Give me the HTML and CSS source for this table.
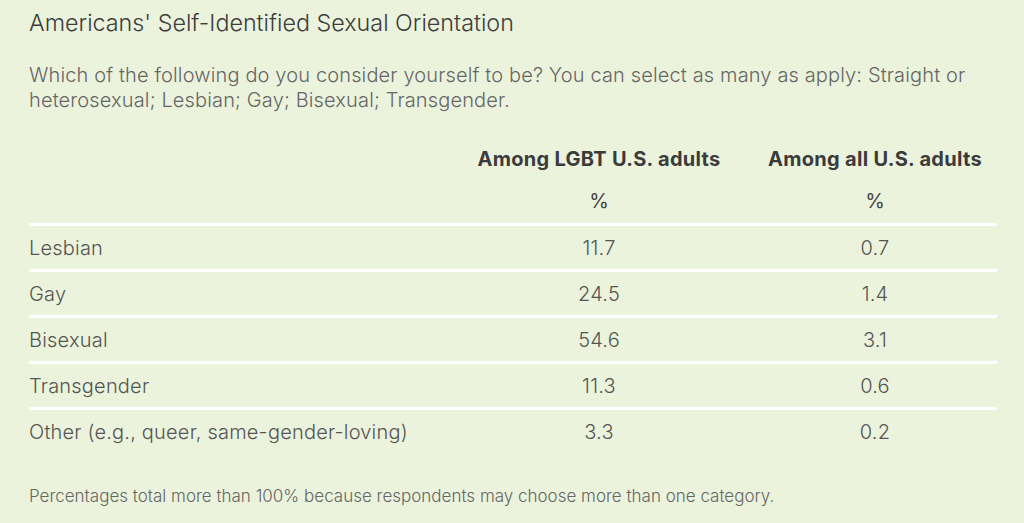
FILE: index.html
```html
<!DOCTYPE html>
<html>
<head>
<meta charset="utf-8">
<link rel="stylesheet" href="styles.css">
</head>
<body>
<div class="page">
  <h1 class="title">Americans' Self-Identified Sexual Orientation</h1>
  <p class="question">Which of the following do you consider yourself to be? You can select as many as apply: Straight or heterosexual; Lesbian; Gay; Bisexual; Transgender.</p>
  <div class="table">
    <div class="row head">
      <div class="cell label"></div>
      <div class="cell num">Among LGBT U.S. adults</div>
      <div class="cell num">Among all U.S. adults</div>
    </div>
    <div class="row unit">
      <div class="cell label"></div>
      <div class="cell num">%</div>
      <div class="cell num">%</div>
    </div>
    <div class="row data">
      <div class="cell label">Lesbian</div>
      <div class="cell num">11.7</div>
      <div class="cell num">0.7</div>
    </div>
    <div class="row data">
      <div class="cell label">Gay</div>
      <div class="cell num">24.5</div>
      <div class="cell num">1.4</div>
    </div>
    <div class="row data">
      <div class="cell label">Bisexual</div>
      <div class="cell num">54.6</div>
      <div class="cell num">3.1</div>
    </div>
    <div class="row data">
      <div class="cell label">Transgender</div>
      <div class="cell num">11.3</div>
      <div class="cell num">0.6</div>
    </div>
    <div class="row data last">
      <div class="cell label">Other (e.g., queer, same-gender-loving)</div>
      <div class="cell num">3.3</div>
      <div class="cell num">0.2</div>
    </div>
  </div>
  <p class="note">Percentages total more than 100% because respondents may choose more than one category.</p>
</div>
</body>
</html>
```

FILE: styles.css
```css
html, body {
  margin: 0;
  padding: 0;
  background: #ebf3dc;
}
body {
  font-family: Inter, "Noto Sans", sans-serif;
  color: #555;
}
.page {
  padding: 8px 27px 0 29px;
  width: 968px;
}
.title {
  margin: 0;
  font-size: 23.3px;
  font-weight: 300;
  line-height: 30px;
  color: #3d3d3d;
}
.question {
  margin: 25px 0 0;
  font-size: 20px;
  letter-spacing: 0.14px;
  font-weight: 300;
  line-height: 25px;
  color: #666;
}
.table {
  margin-top: 27px;
}
.row {
  display: grid;
  grid-template-columns: 416px 308px 244px;
  align-items: center;
}
.row.head {
  height: 38px;
  font-weight: 700;
  font-size: 20px;
  letter-spacing: 0.3px;
  color: #3b3b3b;
}
.row.unit {
  height: 45px;
  font-size: 20px;
  color: #444;
  border-bottom: 3px solid #fff;
}
.row.data {
  height: 43px;
  font-size: 20px;
  letter-spacing: 0.2px;
  font-weight: 300;
  color: #555;
  border-bottom: 3px solid #fff;
}
.row.data.last {
  border-bottom: none;
}
.num {
  text-align: center;
}
.note {
  margin: 33px 0 0;
  font-size: 17px;
  font-weight: 300;
  color: #666;
}
```
